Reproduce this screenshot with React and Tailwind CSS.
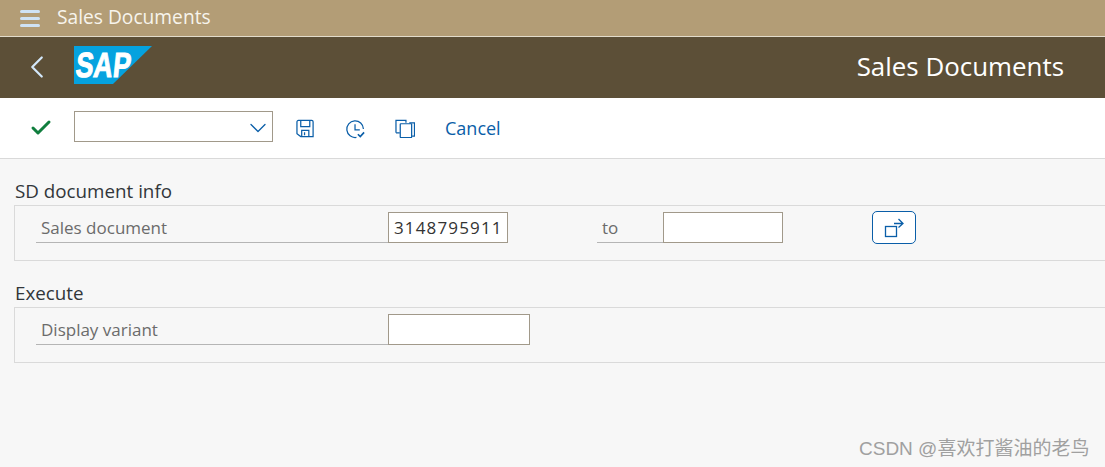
import React from 'react'
import { ChevronLeft, ChevronDown, Check } from 'lucide-react'

const font = "font-['Open_Sans','Noto_Sans',sans-serif]"

function SaveIcon() {
  return (
    <svg width="19" height="19" viewBox="0 0 20 20" fill="none" stroke="#0a5ea8" strokeWidth="1.300">
      <path d="M2.500 1.500h14a1.500 1.500 0 0 1 1.500 1.500v15.500h-13l-4-3v-12.500a1.500 1.500 0 0 1 1.500-1.500z" />
      <path d="M5 1.500v6.500h9.500v-6.500M6 18.500v-6.500h7.500v6.500M9 14v3" />
    </svg>
  )
}

function HistoryIcon() {
  return (
    <svg width="21" height="20" viewBox="0 0 22 20" fill="none" stroke="#0a5ea8" strokeWidth="1.300">
      <path d="M12 18.800a8.700 8.700 0 1 1 7.300-8.800" />
      <path d="M10.500 5v6h5" />
      <path d="M13.500 15.500l2.500 2.500 4-4.500" strokeWidth="1.700" />
    </svg>
  )
}

function CopyIcon() {
  return (
    <svg width="20" height="19" viewBox="0 0 21 20" fill="none" stroke="#0a5ea8" strokeWidth="1.300">
      <path d="M1 14.500V1.500h10.500v2.500" />
      <path d="M1 14.500h4M15 4h5.500v14H18" />
      <rect x="5.500" y="5" width="12" height="14.500" rx="0.500" />
    </svg>
  )
}

function ExportIcon() {
  return (
    <svg width="20" height="20" viewBox="0 0 20 20" fill="none" stroke="#0a5ea8" strokeWidth="1.300">
      <rect x="1.500" y="8.500" width="11" height="10" />
      <path d="M10 5.500h9M14.500 1l4.500 4.500-4.500 4" />
    </svg>
  )
}

function SapLogo() {
  return (
    <svg width="78" height="38" viewBox="0 0 78 38">
      <polygon points="0,0 78,0 39,38 0,38" fill="#05a2df" />
      <text x="0" y="31" transform="skewX(-6) translate(4 0)" fontSize="35" fontWeight="700" fill="#fff" stroke="#fff" strokeWidth="1" textLength="55" lengthAdjust="spacingAndGlyphs" fontFamily="'Liberation Sans', sans-serif">SAP</text>
    </svg>
  )
}

function Field({ label, labelWidth, inputWidth, value }) {
  return (
    <div className="flex items-end h-[31px]">
      <div className={`border-b border-[#b5b5b5] h-[31px] pl-[5px] text-[17px] leading-[32px] text-[#6b6b6b] ${labelWidth}`}>{label}</div>
      <div className={`h-[31px] bg-white border border-[#a1998a] px-[5px] text-[17px] leading-[30px] tracking-[1.150px] text-[#333] ${inputWidth}`}>{value}</div>
    </div>
  )
}

function Section({ title, children }) {
  return (
    <section>
      <h2 className="h-[26px] pl-[15px] text-[18.800px] leading-[24px] text-[#32363a]">{title}</h2>
      <div className="ml-[14px] h-[56px] border border-r-0 border-[#dadada] pl-[21px] pt-[6px] flex items-start">
        {children}
      </div>
    </section>
  )
}

export default function App() {
  return (
    <div className={`relative h-[467px] w-[1105px] overflow-hidden bg-[#f7f7f7] ${font}`}>
      {/* Shell header */}
      <header className="h-[37px] bg-[#b39d76] border-b border-[#e3dccb] flex items-center pl-[20px]">
        <div className="w-[20px] flex flex-col gap-[4px]">
          <span className="h-[3px] bg-[#cfe3f5] rounded-sm" />
          <span className="h-[3px] bg-[#cfe3f5] rounded-sm" />
          <span className="h-[3px] bg-[#cfe3f5] rounded-sm" />
        </div>
        <span className="ml-[17px] -mt-[2px] text-[19.200px] text-[#f7f4ec]">Sales Documents</span>
      </header>

      <div className="h-[61px] bg-[#5c4f37] flex items-center pl-[18px] pr-[41px]">
        <ChevronLeft size={38} strokeWidth={1.400} className="text-[#d3e8fa] -mt-[2px]" />
        <div className="ml-[18px] -mt-[6px] h-[38px]"><SapLogo /></div>
        <h1 className="ml-auto -mt-[2px] text-[25.900px] text-white">Sales Documents</h1>
      </div>

      {/* Toolbar */}
      <div className="h-[61px] bg-white border-b border-[#d9d9d9] flex items-center pl-[29px]">
        <Check size={24} strokeWidth={3} className="text-[#107e3e]" />
        <div className="ml-[21px] -mt-[3px] w-[199px] h-[31px] border border-[#a1998a] flex items-center justify-end">
          <ChevronDown size={28} strokeWidth={1.100} className="text-[#0a5ea8] mt-[2px]" />
        </div>
        <div className="ml-[23px] mt-[1px]"><SaveIcon /></div>
        <div className="ml-[30px] mt-[1px]"><HistoryIcon /></div>
        <div className="ml-[29px] mt-[1px]"><CopyIcon /></div>
        <button className="ml-[30px] text-[18px] text-[#0a5ea8]">Cancel</button>
      </div>

      <main className="pt-[20px] flex flex-col gap-[20px]">
        <Section title="SD document info">
          <Field label="Sales document" labelWidth="w-[352px]" inputWidth="w-[120px]" value="3148795911" />
          <div className="ml-[89px]">
            <Field label="to" labelWidth="w-[66px]" inputWidth="w-[120px]" value="" />
          </div>
          <button className="ml-[89px] -mt-[1px] w-[44px] h-[33px] bg-white border-[1.500px] border-[#0a5ea8] rounded-[5px] flex items-center justify-center">
            <ExportIcon />
          </button>
        </Section>
        <Section title="Execute">
          <Field label="Display variant" labelWidth="w-[352px]" inputWidth="w-[142px]" value="" />
        </Section>
      </main>

      {/* Watermark */}
      <div className="absolute left-[859px] top-[436px] text-[19px] leading-[26px] whitespace-nowrap text-[#a0a0a0] font-['Liberation_Sans','Noto_Sans_CJK_SC',sans-serif]">
        CSDN @喜欢打酱油的老鸟
      </div>
    </div>
  )
}
